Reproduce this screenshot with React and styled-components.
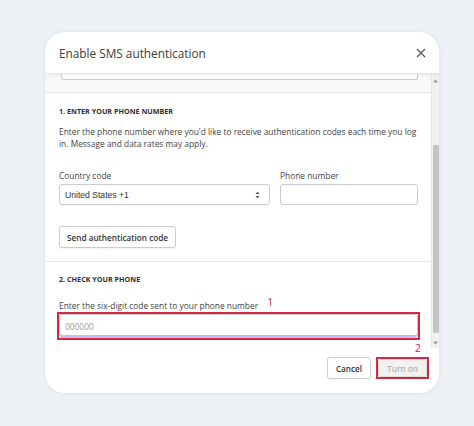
import React from "react";
import styled, { createGlobalStyle } from "styled-components";

const GlobalStyle = createGlobalStyle`
  html, body {
    margin: 0;
    padding: 0;
    background: #edf0f4;
    font-family: "Open Sans", "Noto Sans", sans-serif;
    color: #333;
  }
  * { box-sizing: border-box; }
`;

const Page = styled.div`
  width: 474px;
  height: 426px;
  padding: 32px 0 0 45px;
  background: #edf0f4;
`;

const Modal = styled.div`
  width: 394px;
  height: 361px;
  background: #fff;
  border-radius: 20px;
  overflow: hidden;
  display: flex;
  flex-direction: column;
  box-shadow: 0 0 5px rgba(0, 0, 0, 0.07);
`;

const Header = styled.div`
  height: 42px;
  flex: none;
  display: flex;
  align-items: center;
  justify-content: space-between;
  padding: 0 13px 0 14px;
  border-bottom: 1px solid #e4e5e7;
  box-shadow: 0 2px 3px rgba(0, 0, 0, 0.04);
  position: relative;
  z-index: 1;
`;

const Title = styled.h2`
  margin: 0;
  font-size: 11.8px;
  font-weight: 400;
  color: #3b3b3b;
`;

const Close = styled.button`
  border: 0;
  background: none;
  padding: 0;
  width: 10px;
  height: 10px;
  display: flex;
`;

const Body = styled.div`
  height: 274px;
  flex: none;
  display: flex;
`;

const Content = styled.div`
  flex: 1;
  overflow: hidden;
`;

const Section = styled.div`
  padding: ${(p) => p.$pad || "13px 13px 13px 14px"};
  border-bottom: 1px solid #e3e5e7;
  background: ${(p) => p.$bg || "#fff"};
`;

const StubInput = styled.div`
  height: 6px;
  margin-left: 1px;
  border: 1px solid #c9cccf;
  border-top: 0;
  border-radius: 0 0 3px 3px;
  background: #fff;
`;

const SectionTitle = styled.div`
  font-size: 7.2px;
  font-weight: 700;
  line-height: 10px;
  color: #2f2f2f;
  text-transform: uppercase;
  margin-left: ${(p) => p.$ml || "0"};
`;

const Text = styled.p`
  margin: ${(p) => p.$margin || "10px 0 0"};
  font-size: 8.4px;
  line-height: 12px;
  color: #444;
`;

const Fields = styled.div`
  display: grid;
  grid-template-columns: 211px 1fr;
  gap: 10px;
  margin-top: 20px;
`;

const Field = styled.div`
  display: flex;
  flex-direction: column;
  gap: 2px;
`;

const Label = styled.label`
  font-size: 8.4px;
  line-height: 12px;
  color: #444;
`;

const Select = styled.div`
  height: 21px;
  border: 1px solid #c9cccf;
  border-radius: 3px;
  display: flex;
  align-items: center;
  justify-content: space-between;
  padding: 0 9px 0 5px;
  font-family: "Liberation Sans", Arial, sans-serif;
  font-size: 8.6px;
  color: #333;
  box-shadow: 0 1px 1px rgba(0, 0, 0, 0.04);
`;

const Input = styled.div`
  height: ${(p) => p.$h || "21px"};
  border: 1px solid #c9cccf;
  border-radius: 3px;
  display: flex;
  align-items: center;
  padding: 0 5px;
  font-size: 8.4px;
  color: #9a9a9a;
  background: #fff;
  box-shadow: ${(p) => (p.$focus ? "inset 0 -2px 0 #c7b8ee" : "none")};
`;

const Button = styled.button`
  height: ${(p) => p.$h || "22px"};
  padding: 0 ${(p) => p.$px || "8px"};
  border: 1px solid ${(p) => (p.$disabled ? "#dcdcdc" : "#c9cccf")};
  border-radius: 3px;
  background: ${(p) => (p.$disabled ? "#f1f1f1" : "#fff")};
  color: ${(p) => (p.$disabled ? "#b3b3b3" : "#333")};
  font-family: "Open Sans", "Noto Sans", sans-serif;
  font-size: 8.2px;
  font-weight: 600;
  box-shadow: 0 1px 1px rgba(0, 0, 0, 0.05);
`;

const SendRow = styled.div`
  margin-top: 21px;
  display: flex;
`;

const Mark = styled.div`
  display: flex;
  flex-direction: column;
  border: 2px solid #d32a42;
  position: relative;
`;

const Note = styled.span`
  color: #d0283f;
  font-family: "Open Sans", sans-serif;
  font-size: 10.5px;
  margin-left: 9px;
  position: relative;
  top: -3px;
`;

const NoteBadge = styled.span`
  position: absolute;
  right: 6px;
  top: -18px;
  color: #d0283f;
  font-family: "Open Sans", sans-serif;
  font-size: 10.5px;
`;

const Scrollbar = styled.div`
  width: 8px;
  flex: none;
  background: #f1f1f1;
  border-left: 1px solid #e6e6e6;
  display: flex;
  flex-direction: column;
  align-items: center;
  padding: 5px 0 3px;
`;

const Thumb = styled.div`
  width: 6px;
  flex: 1;
  margin: 62px 0 8px;
  background: #c4c4c4;
  border-radius: 1px;
`;

const Footer = styled.div`
  flex: 1;
  display: flex;
  justify-content: flex-end;
  align-items: flex-start;
  gap: 5px;
  padding: 9px 10px 0 0;
`;

const Arrow = ({ down }) => (
  <svg width="5" height="4" viewBox="0 0 5 4">
    <path d={down ? "M0 0.5h5L2.5 3.5z" : "M0 3.5h5L2.5 0.5z"} fill="#9a9a9a" />
  </svg>
);

export default function App() {
  return (
    <>
      <GlobalStyle />
      <Page>
        <Modal>
          <Header>
            <Title>Enable SMS authentication</Title>
            <Close aria-label="Close">
              <svg width="10" height="10" viewBox="0 0 10 10">
                <path d="M1 1l8 8M9 1l-8 8" stroke="#555" strokeWidth="1.2" />
              </svg>
            </Close>
          </Header>
          <Body>
            <Content>
              <Section $pad="0 13px 12px 15px" $bg="#f8f8f9">
                <StubInput />
              </Section>
              <Section>
                <SectionTitle>1. Enter your phone number</SectionTitle>
                <Text>
                  Enter the phone number where you'd like to receive authentication codes each time you log
                  in. Message and data rates may apply.
                </Text>
                <Fields>
                  <Field>
                    <Label>Country code</Label>
                    <Select>
                      <span>United States +1</span>
                      <svg width="5" height="8" viewBox="0 0 5 8">
                        <path d="M0.5 3L2.5 0.8L4.5 3zM0.5 5L2.5 7.2L4.5 5z" fill="#555" />
                      </svg>
                    </Select>
                  </Field>
                  <Field>
                    <Label>Phone number</Label>
                    <Input />
                  </Field>
                </Fields>
                <SendRow>
                  <Button $px="7px">Send authentication code</Button>
                </SendRow>
              </Section>
              <Section $pad="12px 11px 9px 12px">
                <SectionTitle $ml="2px">2. Check your phone</SectionTitle>
                <Text $margin="15px 0 0 2px">
                  Enter the six-digit code sent to your phone number
                  <Note>1</Note>
                </Text>
                <Mark>
                  <Input $h="24px" $focus>000000</Input>
                </Mark>
              </Section>
            </Content>
            <Scrollbar>
              <Arrow />
              <Thumb />
              <Arrow down />
            </Scrollbar>
          </Body>
          <Footer>
            <Button $px="8px">Cancel</Button>
            <Mark>
              <Button $px="8px" $h="18px" $disabled>Turn on</Button>
              <NoteBadge>2</NoteBadge>
            </Mark>
          </Footer>
        </Modal>
      </Page>
    </>
  );
}
